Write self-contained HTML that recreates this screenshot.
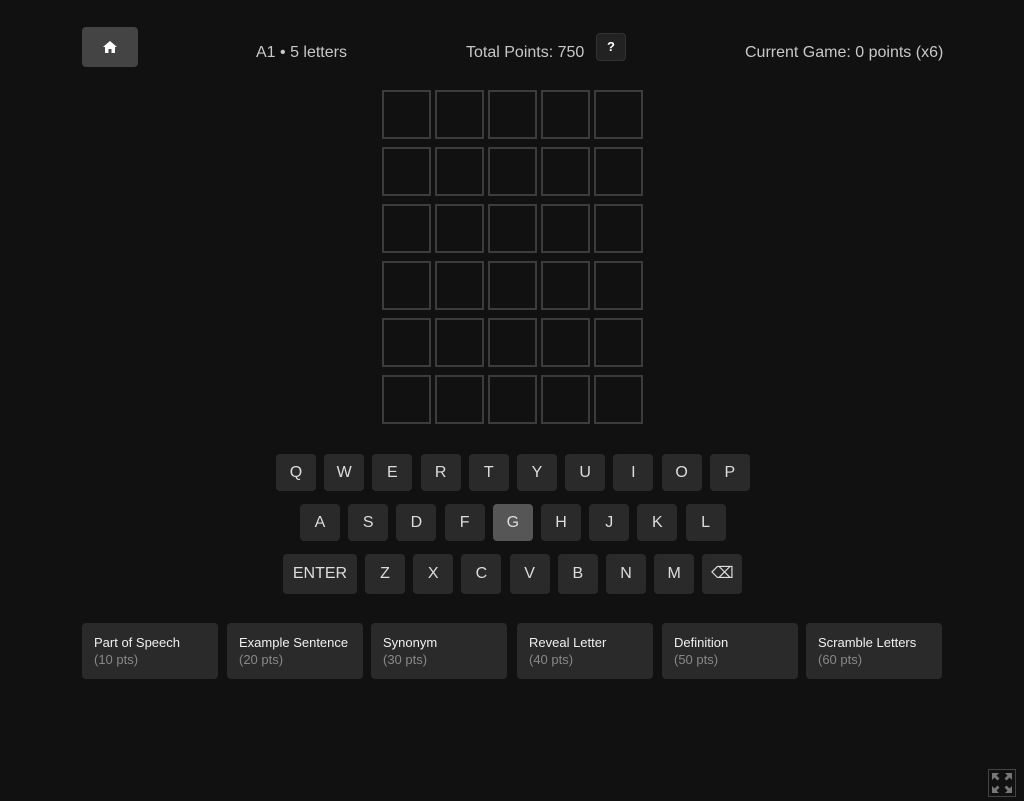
<!DOCTYPE html>
<html><head><meta charset="utf-8"><style>
*{box-sizing:border-box;margin:0;padding:0}
body{width:1024px;height:800px;background:#111;font-family:"Liberation Sans",sans-serif;color:#ccc;position:relative;overflow:hidden}
.abs{position:absolute}
.home{left:82px;top:27px;width:56px;height:40px;background:#444;border-radius:4px}
.txt{font-size:16px;color:#c8c8c8;top:44px;white-space:nowrap}
.q{left:596px;top:33px;width:30px;height:28px;background:#222;border:1px solid #333;border-radius:4px;color:#fff;font-weight:bold;font-size:13px;text-align:center;line-height:26px}
.cell{width:49px;height:49px;border:2px solid #3c3c3c}
.key{height:37px;width:40px;background:#2a2a2a;border-radius:4px;color:#ddd;font-size:16px;text-align:center;line-height:37px}
.hint{top:623px;height:56px;width:136px;background:#2a2a2a;border-radius:4px;padding:11px 12px;font-size:13px;color:#f0f0f0;line-height:17px}
.hint span{color:#888;display:block;font-size:13px}
</style></head><body>
<div class="abs home"><svg width="56" height="40" viewBox="0 0 56 40"><path d="M28 14 L21 20 H23 V26 H26.5 V22 H29.5 V26 H33 V20 H35 Z" fill="#fff"/></svg></div>
<div class="abs txt" style="left:256px">A1 • 5 letters</div>
<div class="abs txt" style="left:466px">Total Points: 750</div>
<div class="abs q">?</div>
<div class="abs txt" style="left:745px">Current Game: 0 points (x6)</div>
<div id="grid"></div>
<div id="kb"></div>
<div class="abs hint" style="left:82px">Part of Speech<span>(10 pts)</span></div>
<div class="abs hint" style="left:227px">Example Sentence<span>(20 pts)</span></div>
<div class="abs hint" style="left:371px">Synonym<span>(30 pts)</span></div>
<div class="abs hint" style="left:517px">Reveal Letter<span>(40 pts)</span></div>
<div class="abs hint" style="left:662px">Definition<span>(50 pts)</span></div>
<div class="abs hint" style="left:806px">Scramble Letters<span>(60 pts)</span></div>
<div class="abs" style="left:988px;top:769px;width:28px;height:28px;border:1px solid #444">
<svg width="26" height="26" viewBox="0 0 26 26" fill="#777"><path d="M3 3h7l-2.5 2.5 3 3-2 2-3-3L3 10z M23 3v7l-2.5-2.5-3 3-2-2 3-3L16 3z M3 23v-7l2.5 2.5 3-3 2 2-3 3L10 23z M23 23h-7l2.5-2.5-3-3 2-2 3 3L23 16z"/></svg></div>
<script>
var g='';for(var r=0;r<6;r++)for(var c=0;c<5;c++)g+='<div class="abs cell" style="left:'+(382+c*53)+'px;top:'+(90+r*57)+'px"></div>';
document.getElementById('grid').innerHTML=g;
var k='';
'QWERTYUIOP'.split('').forEach(function(ch,i){k+='<div class="abs key" style="left:'+(276+i*48.2)+'px;top:454px">'+ch+'</div>'});
'ASDFGHJKL'.split('').forEach(function(ch,i){k+='<div class="abs key" style="left:'+(300+i*48.2)+'px;top:504px;'+(ch=='G'?'background:#565656;':'')+'">'+ch+'</div>'});
k+='<div class="abs key" style="left:283px;top:554px;width:74px;height:40px;line-height:40px">ENTER</div>';
'ZXCVBNM\u232B'.split('').forEach(function(ch,i){k+='<div class="abs key" style="left:'+(365+i*48.2)+'px;top:554px;height:40px;line-height:40px">'+ch+'</div>'});
document.getElementById('kb').innerHTML=k;
</script>
</body></html>
